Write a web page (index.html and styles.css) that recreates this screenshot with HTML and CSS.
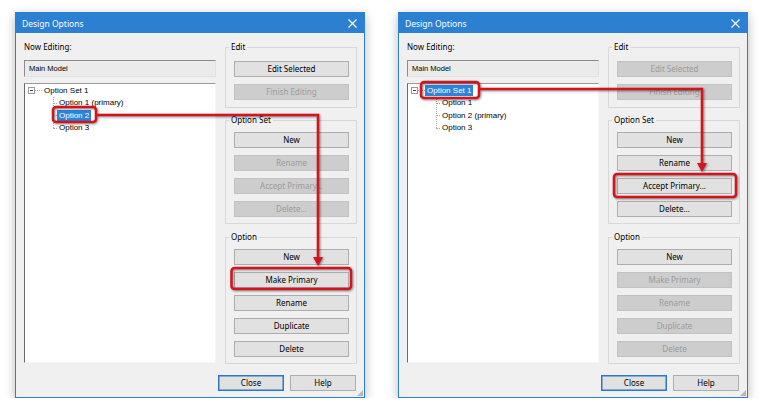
FILE: index.html
```html
<!DOCTYPE html>
<html lang="en">
<head>
<meta charset="utf-8">
<title>Design Options</title>
<link rel="stylesheet" href="styles.css">
</head>
<body>
<div class="page">

  <section class="dialog">
    <header class="titlebar">
      <span class="title">Design Options</span>
      <svg class="close-x" width="9" height="9" viewBox="0 0 9 9"><path d="M0.5 0.5L8.5 8.5M8.5 0.5L0.5 8.5" stroke="#fff" stroke-width="1.2" fill="none"/></svg>
    </header>
    <div class="main">
      <div class="left">
        <div class="label">Now Editing:</div>
        <div class="textbox">Main Model</div>
        <div class="tree">
          <div class="node root">
            <svg class="exp" width="7" height="7" viewBox="0 0 7 7"><rect x="0.5" y="0.5" width="6" height="6" fill="#fff" stroke="#9a9a9a"/><path d="M2 3.5H5" stroke="#444"/></svg>
            <span class="conn"></span>
            <span class="text">Option Set 1</span>
          </div>
          <ul class="children">
            <li class="node"><span class="text">Option 1 (primary)</span></li>
            <li class="node"><span class="text sel">Option 2</span></li>
            <li class="node"><span class="text">Option 3</span></li>
          </ul>
        </div>
      </div>
      <div class="right">
        <fieldset class="group group-edit">
          <legend>Edit</legend>
          <div class="stack">
            <button class="btn">Edit Selected</button>
            <button class="btn" disabled>Finish Editing</button>
          </div>
        </fieldset>
        <fieldset class="group group-set">
          <legend>Option Set</legend>
          <div class="stack">
            <button class="btn">New</button>
            <button class="btn" disabled>Rename</button>
            <button class="btn" disabled>Accept Primary...</button>
            <button class="btn" disabled>Delete...</button>
          </div>
        </fieldset>
        <fieldset class="group group-opt">
          <legend>Option</legend>
          <div class="stack">
            <button class="btn">New</button>
            <button class="btn">Make Primary</button>
            <button class="btn">Rename</button>
            <button class="btn">Duplicate</button>
            <button class="btn">Delete</button>
          </div>
        </fieldset>
      </div>
    </div>
    <footer class="footer">
      <button class="btn btn-foot btn-default">Close</button>
      <button class="btn btn-foot">Help</button>
    </footer>
    <span class="grip"></span>
    <svg class="annot" width="350" height="386" viewBox="0 0 350 386">
      <g class="red">
        <rect x="38" y="95" width="43" height="15" rx="3"/>
        <path d="M81 103H303V247"/>
        <polygon points="298,245 308,245 303,254"/>
        <rect x="216.5" y="256" width="119.5" height="21" rx="3"/>
      </g>
    </svg>
  </section>

  <section class="dialog">
    <header class="titlebar">
      <span class="title">Design Options</span>
      <svg class="close-x" width="9" height="9" viewBox="0 0 9 9"><path d="M0.5 0.5L8.5 8.5M8.5 0.5L0.5 8.5" stroke="#fff" stroke-width="1.2" fill="none"/></svg>
    </header>
    <div class="main">
      <div class="left">
        <div class="label">Now Editing:</div>
        <div class="textbox">Main Model</div>
        <div class="tree">
          <div class="node root">
            <svg class="exp" width="7" height="7" viewBox="0 0 7 7"><rect x="0.5" y="0.5" width="6" height="6" fill="#fff" stroke="#9a9a9a"/><path d="M2 3.5H5" stroke="#444"/></svg>
            <span class="conn"></span>
            <span class="text sel">Option Set 1</span>
          </div>
          <ul class="children">
            <li class="node"><span class="text">Option 1</span></li>
            <li class="node"><span class="text">Option 2 (primary)</span></li>
            <li class="node"><span class="text">Option 3</span></li>
          </ul>
        </div>
      </div>
      <div class="right">
        <fieldset class="group group-edit">
          <legend>Edit</legend>
          <div class="stack">
            <button class="btn" disabled>Edit Selected</button>
            <button class="btn" disabled>Finish Editing</button>
          </div>
        </fieldset>
        <fieldset class="group group-set">
          <legend>Option Set</legend>
          <div class="stack">
            <button class="btn">New</button>
            <button class="btn">Rename</button>
            <button class="btn">Accept Primary...</button>
            <button class="btn">Delete...</button>
          </div>
        </fieldset>
        <fieldset class="group group-opt">
          <legend>Option</legend>
          <div class="stack">
            <button class="btn">New</button>
            <button class="btn" disabled>Make Primary</button>
            <button class="btn" disabled>Rename</button>
            <button class="btn" disabled>Duplicate</button>
            <button class="btn" disabled>Delete</button>
          </div>
        </fieldset>
      </div>
    </div>
    <footer class="footer">
      <button class="btn btn-foot btn-default">Close</button>
      <button class="btn btn-foot">Help</button>
    </footer>
    <span class="grip"></span>
    <svg class="annot" width="350" height="386" viewBox="0 0 350 386">
      <g class="red">
        <rect x="23" y="70" width="58" height="16" rx="3"/>
        <path d="M81 77H304V152"/>
        <polygon points="299,151 309,151 304,160"/>
        <rect x="216" y="162" width="122" height="23" rx="3"/>
      </g>
    </svg>
  </section>

</div>
</body>
</html>
```

FILE: styles.css
```css
html, body {
  margin: 0;
  padding: 0;
  background: #ffffff;
}

body {
  font-family: "Noto Sans", "Open Sans", sans-serif;
  font-size: 8px;
  color: #000;
}

.page {
  display: flex;
  gap: 33px;
  padding: 12px 0 0 15px;
}

.dialog {
  position: relative;
  box-sizing: border-box;
  width: 350px;
  height: 386px;
  border: 1px solid #2b80d2;
  background: #f0f0f0;
  box-shadow: 0 3px 10px rgba(0, 0, 0, 0.28);
  display: flex;
  flex-direction: column;
}

.titlebar {
  height: 20px;
  background: #2b80d2;
  color: #fff;
  display: flex;
  align-items: center;
  justify-content: space-between;
  padding: 0 7px 0 6px;
  font-size: 8.5px;
}

.close-x {
  display: block;
}

.main {
  display: grid;
  grid-template-columns: 192px 132px;
  column-gap: 9px;
  padding: 9px 7px 0 8px;
}

.left {
  display: flex;
  flex-direction: column;
}

.label {
  height: 10px;
  line-height: 10px;
}

.textbox {
  margin-top: 8px;
  height: 17px;
  box-sizing: border-box;
  border: 1px solid;
  border-color: #8c8c8c #e2e2e2 #e2e2e2 #8c8c8c;
  background: #ebebeb;
  font-family: "Liberation Sans", Arial, sans-serif;
  font-size: 7.5px;
  line-height: 15px;
  padding-left: 4px;
}

.tree {
  margin-top: 6px;
  height: 280px;
  box-sizing: border-box;
  border-left: 1px solid #6a6a6a;
  border-top: 1px solid #9a9a9a;
  border-right: 1px solid #f6f6f6;
  border-bottom: 1px solid #f6f6f6;
  background: #fff;
  font-family: "Liberation Sans", Arial, sans-serif;
  font-size: 8px;
}

.node {
  height: 12.5px;
  display: flex;
  align-items: center;
}

.root .exp {
  margin-left: 3px;
  display: block;
}

.conn {
  width: 7px;
  border-top: 1px dotted #a8a8a8;
}

.text {
  padding: 0 2px;
  line-height: 11px;
  white-space: nowrap;
}

.text.sel {
  background: #2d84dc;
  color: #fff;
}

.children {
  list-style: none;
  margin: 0;
  padding: 0 0 0 32px;
  position: relative;
}

.children::before {
  content: "";
  position: absolute;
  left: 28px;
  top: 0;
  height: calc(100% - 6px);
  border-left: 1px dotted #a8a8a8;
}

.children .node {
  position: relative;
}

.children .node::before {
  content: "";
  position: absolute;
  left: -4px;
  top: 50%;
  width: 4px;
  border-top: 1px dotted #a8a8a8;
}

.right {
  display: flex;
  flex-direction: column;
}

.group {
  margin: 0;
  border: 1px solid #d8d8d8;
  min-width: 0;
  padding: 7px 7px 6px 8px;
}

.group legend {
  padding: 0 2px;
  margin-left: -5px;
  line-height: 10px;
  font-size: 8px;
}

.group-edit {
  padding-top: 9px;
  padding-bottom: 7px;
  margin-bottom: 7px;
}

.group-set {
  margin-bottom: 8px;
}

.stack {
  display: flex;
  flex-direction: column;
  gap: 7px;
}

.btn {
  display: block;
  box-sizing: border-box;
  height: 16px;
  width: 100%;
  margin: 0;
  padding: 0;
  border: 1px solid #adadad;
  background: #e1e1e1;
  color: #000;
  font-family: "Noto Sans", "Open Sans", sans-serif;
  font-size: 8px;
  line-height: 14px;
  text-align: center;
}

.btn:disabled {
  background: #cdcdcd;
  border-color: #c2c2c2;
  color: #9c9c9c;
}

.footer {
  display: flex;
  justify-content: flex-end;
  gap: 6px;
  padding: 11px 8px 0 0;
}

.btn-foot {
  width: 66px;
}

.btn-default {
  border-color: #2a78c8;
  box-shadow: inset 0 0 0 0.5px #2a78c8;
}

.grip {
  position: absolute;
  right: 1px;
  bottom: 1px;
  width: 6px;
  height: 6px;
  background-image: radial-gradient(circle, #b4b4b4 0.7px, transparent 0.8px);
  background-size: 2px 2px;
  clip-path: polygon(100% 0, 100% 100%, 0 100%);
}

.annot {
  position: absolute;
  left: -1px;
  top: -1px;
  overflow: visible;
  pointer-events: none;
}

.red {
  filter: drop-shadow(1px 1px 1.2px rgba(0, 0, 0, 0.45));
}

.red rect,
.red path {
  fill: none;
  stroke: #d3141c;
  stroke-width: 2.5;
}

.red polygon {
  fill: #d3141c;
}
```
